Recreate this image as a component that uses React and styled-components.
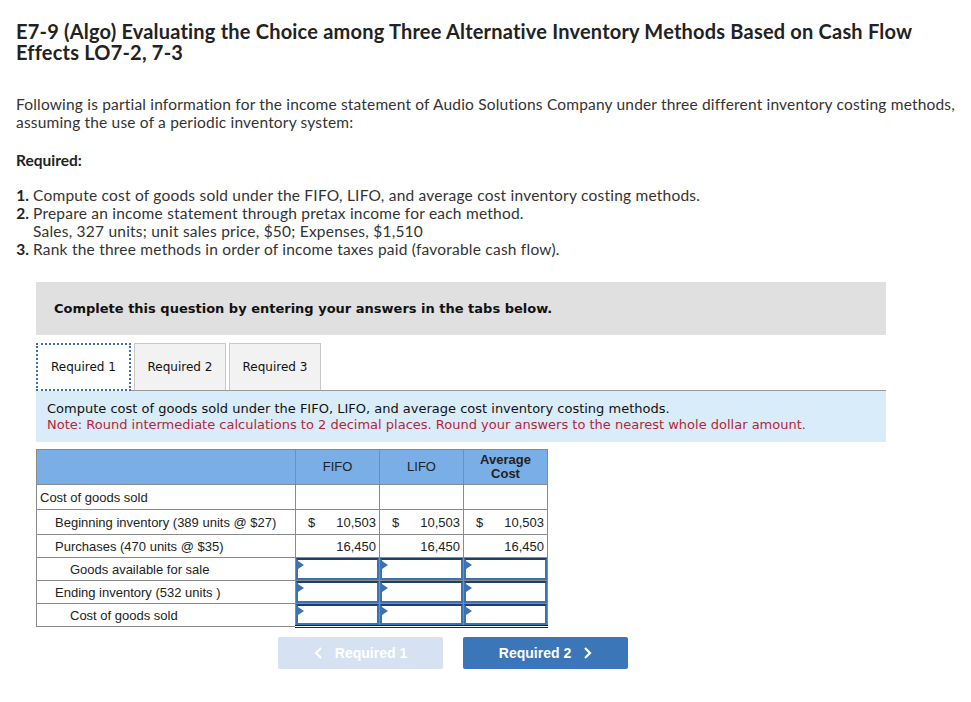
import styled, { createGlobalStyle } from "styled-components";

const GlobalStyle = createGlobalStyle`
  body {
    margin: 0;
    background: #fff;
    font-family: Lato, "Open Sans", sans-serif;
    color: #333;
  }
`;

const Page = styled.div`
  padding: 21px 16px 30px 16px;
`;

const Title = styled.h1`
  margin: 0;
  font-family: Lato, sans-serif;
  font-size: 20px;
  line-height: 21px;
  font-weight: 700;
  color: #222;
  letter-spacing: 0.2px;
`;

const Intro = styled.p`
  margin: 32px 0 0;
  font-size: 15.5px;
  line-height: 18px;
  letter-spacing: 0.18px;
  color: #333;
`;

const Label = styled.p`
  margin: 20px 0 0;
  font-size: 15.5px;
  font-weight: 700;
  color: #222;
`;

const Steps = styled.ol`
  margin: 17px 0 0;
  padding: 0;
  list-style: none;
  font-size: 15.5px;
  line-height: 18px;
  letter-spacing: 0.22px;
`;

const Step = styled.li`
  display: flex;
  gap: 4px;
  b {
    width: 13px;
    text-align: right;
    color: #222;
    letter-spacing: 0;
  }
`;

const Panel = styled.div`
  margin: 24px 0 0 20px;
  width: 850px;
`;

const Banner = styled.div`
  background: #e0e0e0;
  height: 53px;
  display: flex;
  align-items: center;
  padding-left: 18px;
  font-family: "DejaVu Sans", Verdana, sans-serif;
  font-size: 13px;
  font-weight: 700;
  color: #111;
`;

const Tabs = styled.div`
  margin-top: 8px;
  display: flex;
  gap: 3px;
  border-bottom: 1px solid #999;
  height: 47px;
`;

const Tab = styled.div`
  width: ${(p) => (p.$active ? "95px" : "92px")};
  box-sizing: border-box;
  display: flex;
  align-items: center;
  justify-content: center;
  font-family: "DejaVu Sans", Verdana, sans-serif;
  font-size: 12px;
  color: #111;
  background: ${(p) => (p.$active ? "#fff" : "#f2f2f2")};
  border: ${(p) => (p.$active ? "2px dotted #3a6fb5" : "1px solid #c8c8c8")};
  border-bottom: ${(p) => (p.$active ? "2px dotted #3a6fb5" : "none")};
  margin-bottom: ${(p) => (p.$active ? "-1px" : "0")};
`;

const Info = styled.div`
  background: #d9ecf9;
  padding: 10px 11px 9px;
  font-family: "DejaVu Sans", Verdana, sans-serif;
  font-size: 13px;
  line-height: 16px;
  color: #111;
`;

const Note = styled.div`
  color: #b8243a;
`;

const Table = styled.table`
  margin-top: 7px;
  border-collapse: collapse;
  table-layout: fixed;
  font-family: "Liberation Sans", Arial, sans-serif;
  font-size: 13px;
  color: #222;
`;

const Head = styled.th`
  background: #7aaee6;
  border: 1px solid #8a8a8a;
  height: 34px;
  width: ${(p) => p.$w}px;
  padding: 0;
  font-weight: ${(p) => (p.$bold ? 700 : 400)};
  line-height: 14px;
  text-align: center;
`;

const Row = styled.tr`
  height: ${(p) => p.$h}px;
`;

const Name = styled.td`
  border: 1px solid #8a8a8a;
  padding: 0 0 0 ${(p) => 3 + p.$indent * 15}px;
  white-space: nowrap;
  overflow: hidden;
`;

const Cell = styled.td`
  border: 1px solid #8a8a8a;
  padding: 0;
  position: relative;
  ${(p) => p.$double && "border-bottom: 3px double #222;"}
`;

const Amount = styled.div`
  display: flex;
  justify-content: space-between;
  padding: 0 3px 0 12px;
`;

const Entry = styled.div`
  position: absolute;
  inset: 0;
  border: 2px solid #3b72b6;
  border-top-color: #1d3f6e;
  background: #fff;
  &::before {
    content: "";
    position: absolute;
    left: 0;
    top: 1px;
    border-left: 6px solid #3b72b6;
    border-top: 4px solid transparent;
    border-bottom: 4px solid transparent;
  }
`;

const Nav = styled.div`
  display: flex;
  gap: 20px;
  margin: 9px 0 0 242px;
`;

const NavButton = styled.button`
  width: 165px;
  height: 32px;
  border: none;
  border-radius: 2px;
  background: ${(p) => (p.$disabled ? "#d6e2f1" : "#3a76b8")};
  color: #fff;
  font-family: "Liberation Sans", Arial, sans-serif;
  font-size: 14px;
  font-weight: 700;
  display: flex;
  align-items: center;
  justify-content: center;
  gap: 12px;
  cursor: pointer;
`;

const Chevron = ({ left }) => (
  <svg width="9" height="12" viewBox="0 0 9 12">
    <path
      d={left ? "M7 1 L2 6 L7 11" : "M2 1 L7 6 L2 11"}
      fill="none"
      stroke="#fff"
      strokeWidth="2.2"
    />
  </svg>
);

const rows = [
  { name: "Cost of goods sold", indent: 0, h: 25, kind: "blank" },
  { name: "Beginning inventory (389 units @ $27)", indent: 1, h: 25, kind: "money", value: "10,503" },
  { name: "Purchases (470 units @ $35)", indent: 1, h: 23, kind: "num", value: "16,450" },
  { name: "Goods available for sale", indent: 2, h: 23, kind: "input" },
  { name: "Ending inventory (532 units )", indent: 1, h: 23, kind: "input" },
  { name: "Cost of goods sold", indent: 2, h: 23, kind: "input", last: true },
];

function ValueCell({ row }) {
  if (row.kind === "blank") return <Cell />;
  if (row.kind === "input")
    return (
      <Cell $double={row.last}>
        <Entry />
      </Cell>
    );
  return (
    <Cell>
      <Amount>
        <span>{row.kind === "money" ? "$" : ""}</span>
        <span>{row.value}</span>
      </Amount>
    </Cell>
  );
}

export default function App() {
  return (
    <Page>
      <GlobalStyle />
      <Title>
        E7-9 (Algo) Evaluating the Choice among Three Alternative Inventory Methods Based on Cash Flow
        Effects LO7-2, 7-3
      </Title>
      <Intro>
        Following is partial information for the income statement of Audio Solutions Company under three different inventory costing methods,
        assuming the use of a periodic inventory system:
      </Intro>
      <Label>Required:</Label>
      <Steps>
        <Step>
          <b>1.</b>
          <span>Compute cost of goods sold under the FIFO, LIFO, and average cost inventory costing methods.</span>
        </Step>
        <Step>
          <b>2.</b>
          <span>
            Prepare an income statement through pretax income for each method.
            <br />
            Sales, 327 units; unit sales price, $50; Expenses, $1,510
          </span>
        </Step>
        <Step>
          <b>3.</b>
          <span>Rank the three methods in order of income taxes paid (favorable cash flow).</span>
        </Step>
      </Steps>

      <Panel>
        <Banner>Complete this question by entering your answers in the tabs below.</Banner>
        <Tabs>
          <Tab $active>Required 1</Tab>
          <Tab>Required 2</Tab>
          <Tab>Required 3</Tab>
        </Tabs>
        <Info>
          Compute cost of goods sold under the FIFO, LIFO, and average cost inventory costing methods.
          <Note>
            Note: Round intermediate calculations to 2 decimal places. Round your answers to the nearest whole dollar amount.
          </Note>
        </Info>

        <Table>
          <thead>
            <tr>
              <Head $w={258} />
              <Head $w={83}>FIFO</Head>
              <Head $w={83}>LIFO</Head>
              <Head $w={83} $bold>
                Average
                <br />
                Cost
              </Head>
            </tr>
          </thead>
          <tbody>
            {rows.map((row, i) => (
              <Row key={i} $h={row.h}>
                <Name $indent={row.indent}>{row.name}</Name>
                <ValueCell row={row} />
                <ValueCell row={row} />
                <ValueCell row={row} />
              </Row>
            ))}
          </tbody>
        </Table>

        <Nav>
          <NavButton $disabled>
            <Chevron left />
            Required 1
          </NavButton>
          <NavButton>
            Required 2
            <Chevron />
          </NavButton>
        </Nav>
      </Panel>
    </Page>
  );
}
